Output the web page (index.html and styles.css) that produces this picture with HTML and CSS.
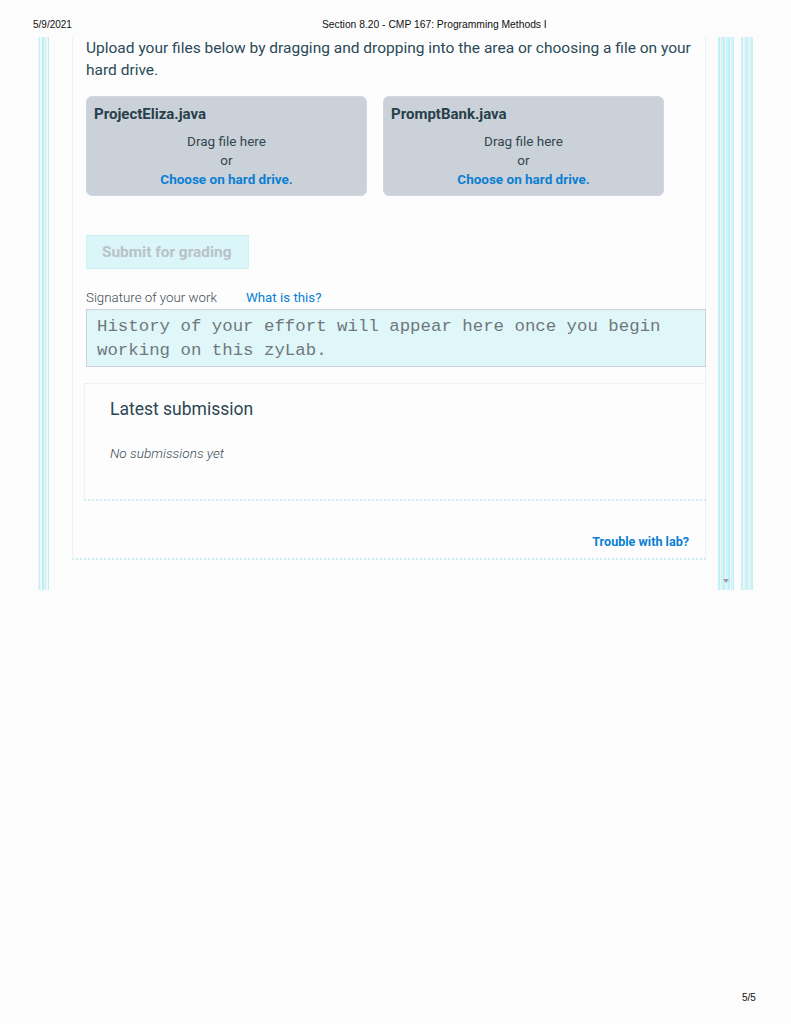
FILE: index.html
```
<!DOCTYPE html>
<html>
<head>
<meta charset="utf-8">
<link rel="stylesheet" href="styles.css">
</head>
<body>
<header class="print-head">
  <span class="date">5/9/2021</span>
  <span class="title">Section 8.20 - CMP 167: Programming Methods I</span>
</header>
<div class="frame">
  <div class="stripe-left"></div>
  <main class="card">
    <p class="intro">Upload your files below by dragging and dropping into the area or choosing a file on your hard drive.</p>
    <div class="drops">
      <div class="drop">
        <div class="drop-name">ProjectEliza.java</div>
        <div class="drop-body">
          <div>Drag file here</div>
          <div>or</div>
          <div class="choose">Choose on hard drive.</div>
        </div>
      </div>
      <div class="drop">
        <div class="drop-name">PromptBank.java</div>
        <div class="drop-body">
          <div>Drag file here</div>
          <div>or</div>
          <div class="choose">Choose on hard drive.</div>
        </div>
      </div>
    </div>
    <div class="submit">Submit for grading</div>
    <div class="sig-row">
      <span class="sig-label">Signature of your work</span>
      <span class="sig-link">What is this?</span>
    </div>
    <div class="sig-box">History of your effort will appear here once you begin working on this zyLab.</div>
    <section class="latest">
      <h2 class="latest-title">Latest submission</h2>
      <p class="latest-empty">No submissions yet</p>
    </section>
    <div class="trouble-row"><span class="trouble">Trouble with lab?</span></div>
  </main>
  <div class="stripes-right">
    <div class="scroll-track"><span class="scroll-arrow"></span></div>
    <div class="stripe-right2"></div>
  </div>
</div>
<footer class="print-foot">5/5</footer>
</body>
</html>
```
FILE: styles.css
```
html, body {
  margin: 0;
  padding: 0;
}
body {
  width: 791px;
  height: 1024px;
  background: #fcfcfd;
  font-family: Roboto, "Liberation Sans", sans-serif;
  color: #2b4651;
  display: flex;
  flex-direction: column;
}
.print-head {
  height: 37px;
  display: flex;
  align-items: flex-start;
  font-family: "Liberation Sans", Arial, sans-serif;
  font-size: 10px;
  color: #111;
  padding-top: 19px;
  box-sizing: border-box;
}
.date {
  margin-left: 33px;
  width: 289px;
}
.title {
  font-size: 10.3px;
}
.frame {
  display: flex;
  height: 553px;
}
.stripe-left {
  margin-left: 38px;
  width: 11px;
  background: repeating-linear-gradient(90deg, #dff8fb 0 1px, #c6f1f6 1px 2px, #f3f5f6 2px 4px, #bdeef5 4px 6px);
}
.card {
  margin-left: 23px;
  width: 634px;
  height: 523px;
  box-sizing: border-box;
  background: #fdfdfe;
  border-left: 1px solid #eef0f2;
  border-right: 1px solid #eef0f2;
  border-bottom: 2px dotted #c9eff4;
  padding: 0 16px 0 13px;
  display: flex;
  flex-direction: column;
}
.intro {
  margin: 0 -12px 0 0;
  font-size: 15.5px;
  line-height: 22px;
  color: #2b4a55;
}
.drops {
  margin-top: 15px;
  display: flex;
  gap: 16px;
}
.drop {
  width: 281px;
  height: 100px;
  box-sizing: border-box;
  border-radius: 6px;
  background: #cbd1d9;
  border: 1px solid #cfd6df;
  padding: 7px 7px 0;
}
.drop-name {
  font-weight: 700;
  font-size: 15px;
  line-height: 20px;
  color: #27404a;
}
.drop-body {
  margin-top: 8px;
  text-align: center;
  font-size: 13.5px;
  line-height: 19px;
  color: #33474f;
}
.choose {
  font-weight: 700;
  color: #0a7fd3;
}
.submit {
  margin-top: 39px;
  width: 163px;
  height: 34px;
  box-sizing: border-box;
  background: #dbf6f9;
  border: 1px dotted #c4ecf2;
  color: #b9c3c6;
  font-weight: 700;
  font-size: 15.4px;
  line-height: 32px;
  padding-left: 15px;
}
.sig-row {
  margin-top: 19px;
  height: 18px;
  display: flex;
  align-items: center;
  font-size: 13.3px;
}
.sig-label {
  font-weight: 300;
  color: #444d52;
  width: 160px;
}
.sig-link {
  color: #0a7fd3;
}
.sig-box {
  margin-top: 3px;
  width: 620px;
  height: 58px;
  box-sizing: border-box;
  border: 1px solid #c9d2de;
  background: #e0f7fa;
  font-family: "Liberation Mono", "Courier New", monospace;
  font-size: 17.4px;
  line-height: 24px;
  color: #70777b;
  padding: 5px 10px 0;
}
.latest {
  margin: 16px 0 0 -2px;
  width: 622px;
  height: 118px;
  box-sizing: border-box;
  border-top: 1px dotted #e2e6ea;
  border-left: 1px solid #eef0f2;
  border-bottom: 2px dotted #cdf0f5;
  padding: 14px 0 0 25px;
}
.latest-title {
  margin: 0;
  font-weight: 400;
  font-size: 17.5px;
  line-height: 22px;
  color: #2b4651;
}
.latest-empty {
  margin: 24px 0 0;
  font-style: italic;
  font-weight: 300;
  font-size: 13.6px;
  line-height: 18px;
  color: #3b4d55;
}
.trouble-row {
  margin-top: 32px;
  display: flex;
  justify-content: flex-end;
}
.trouble {
  font-weight: 700;
  font-size: 12.6px;
  line-height: 18px;
  color: #0a7fd3;
}
.stripes-right {
  margin-left: 12px;
  display: flex;
  gap: 7px;
}
.scroll-track {
  width: 16px;
  background: repeating-linear-gradient(90deg, #c3f0f6 0 2px, #f2f4f6 2px 3px, #d2f5f9 3px 5px);
  display: flex;
  align-items: flex-end;
  justify-content: center;
  padding-bottom: 7px;
  box-sizing: border-box;
}
.scroll-arrow {
  width: 0;
  height: 0;
  border-left: 3px solid transparent;
  border-right: 3px solid transparent;
  border-top: 4px solid #9a9ea4;
}
.stripe-right2 {
  width: 12px;
  background: repeating-linear-gradient(90deg, #c8f1f6 0 2px, #f1f3f5 2px 3px, #d8f6fa 3px 5px);
}
.print-foot {
  margin-top: auto;
  margin-bottom: 21px;
  margin-left: 742px;
  font-family: "Liberation Sans", Arial, sans-serif;
  font-size: 10px;
  color: #111;
}
```
